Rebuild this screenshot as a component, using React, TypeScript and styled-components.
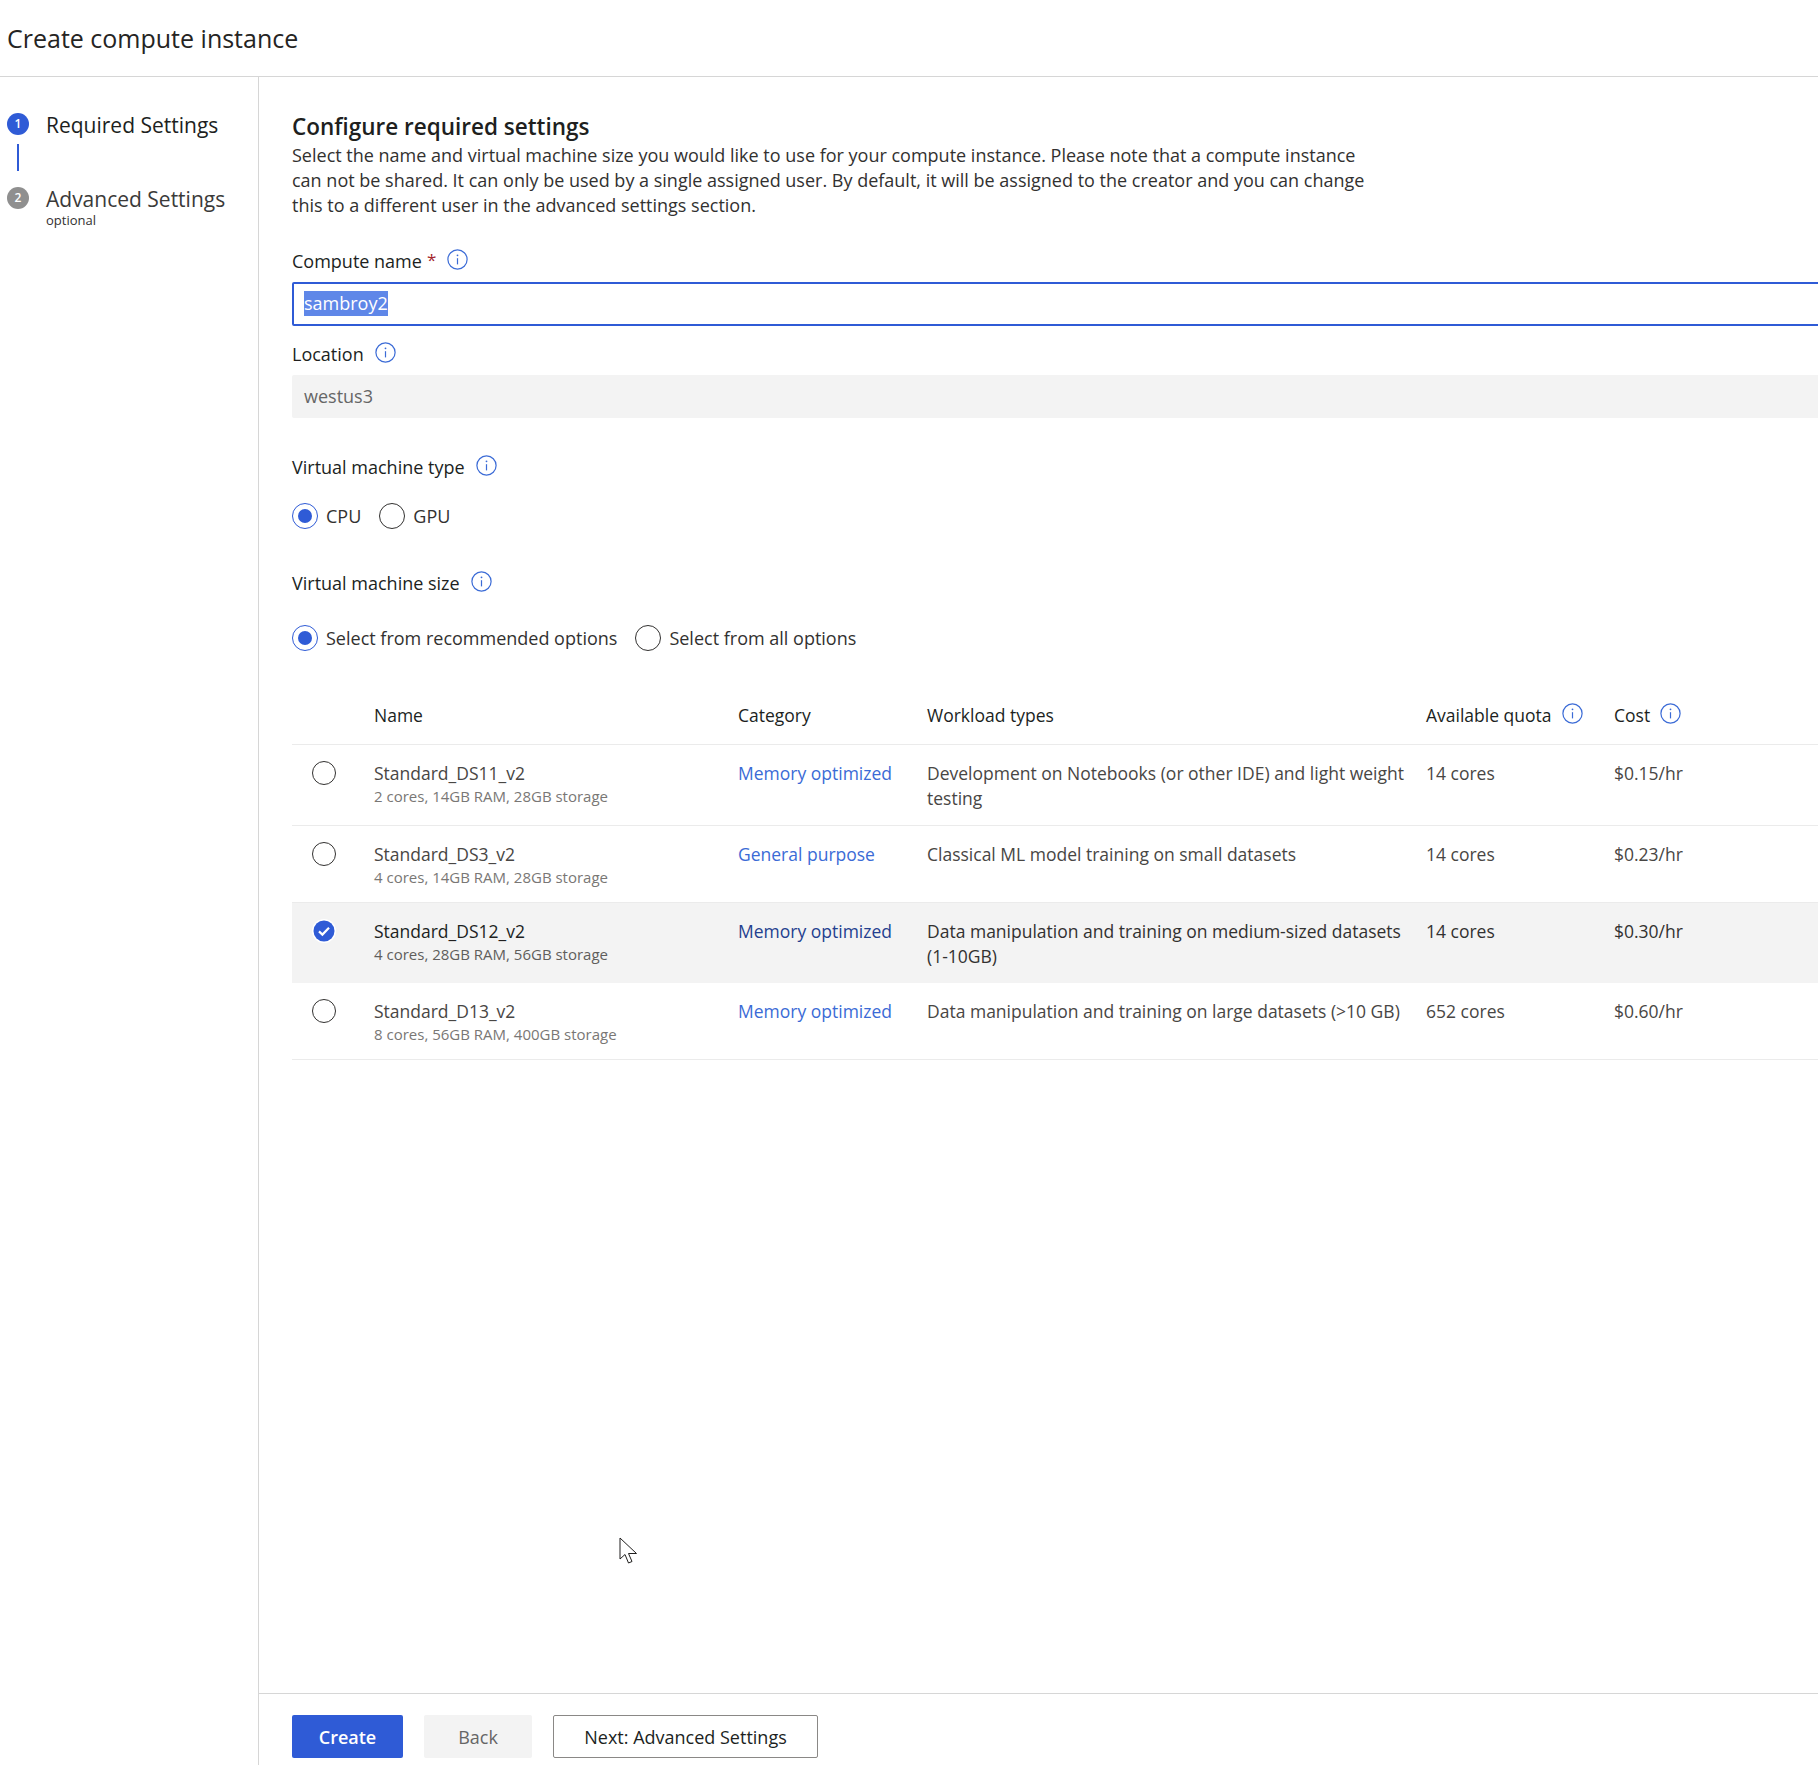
import styled, { createGlobalStyle } from 'styled-components';

const GlobalStyle = createGlobalStyle`
  html, body {
    margin: 0;
    padding: 0;
    background: #fff;
  }
  body {
    font-family: 'Open Sans', 'Noto Sans', sans-serif;
    color: #323130;
  }
`;

const Page = styled.div`
  width: 1818px;
  height: 1765px;
  display: flex;
  flex-direction: column;
  overflow: hidden;
`;

const Header = styled.header`
  height: 76px;
  flex: none;
  display: flex;
  align-items: center;
  padding: 0 0 0 7px;
  border-bottom: 1px solid #d6d6d6;
`;

const PageTitle = styled.h1`
  margin: 0;
  font-size: 25px;
  font-weight: 400;
  color: #252423;
`;

const Body = styled.div`
  flex: 1;
  display: flex;
  min-height: 0;
`;

const Sidebar = styled.aside`
  width: 259px;
  flex: none;
  box-sizing: border-box;
  border-right: 1px solid #d6d6d6;
  padding: 36px 0 0 7px;
`;

const Step = styled.div`
  display: grid;
  grid-template-columns: 22px 1fr;
  column-gap: 17px;
`;

const StepDot = styled.div<{ $active?: boolean }>`
  width: 22px;
  height: 22px;
  border-radius: 50%;
  background: ${(p) => (p.$active ? '#2f5bd6' : '#8f8f8f')};
  color: #fff;
  font-size: 12px;
  line-height: 22px;
  text-align: center;
  font-weight: 600;
`;

const StepName = styled.div<{ $active?: boolean }>`
  font-size: 21px;
  line-height: 24px;
  font-weight: ${(p) => (p.$active ? 500 : 400)};
  color: ${(p) => (p.$active ? '#201f1e' : '#3b3a39')};
  white-space: nowrap;
`;

const StepNote = styled.div`
  font-size: 13px;
  line-height: 18px;
  color: #323130;
`;

const Connector = styled.div`
  width: 2px;
  height: 27px;
  margin: 7px 0 16px 10px;
  background: #2f5bd6;
`;

const Main = styled.main`
  position: relative;
  flex: 1;
  min-width: 0;
  display: flex;
  flex-direction: column;
  overflow: hidden;
`;

const Content = styled.div`
  flex: 1;
  width: 1560px;
  padding: 36px 0 0 33px;
`;

const SectionTitle = styled.h2`
  margin: 0 0 2px;
  font-size: 22.5px;
  line-height: 28px;
  font-weight: 600;
  color: #201f1e;
`;

const Description = styled.p`
  margin: 0;
  width: 1090px;
  font-size: 18px;
  line-height: 25px;
  color: #323130;
`;

const LabelRow = styled.div<{ $top: number }>`
  display: flex;
  align-items: flex-start;
  height: 34px;
  margin-top: ${(p) => p.$top}px;
`;

const Label = styled.span`
  font-size: 18px;
  line-height: 27px;
  font-weight: 500;
  color: #201f1e;
`;

const Required = styled.span`
  margin-left: 5px;
  font-size: 17px;
  line-height: 24px;
  color: #a4262c;
`;

const InfoWrap = styled.span<{ $gap?: number }>`
  display: inline-flex;
  margin-left: ${(p) => p.$gap ?? 11}px;
  margin-top: 1px;
  color: #3b6bd6;
`;

const NameInput = styled.div`
  box-sizing: border-box;
  height: 44px;
  border: 2px solid #2f5bd6;
  border-radius: 2px;
  padding: 7px 0 0 10px;
  font-size: 18px;
  line-height: 25px;
`;

const Selected = styled.span`
  display: inline-block;
  background: #5f87e8;
  color: #fff;
`;

const ReadOnlyInput = styled.div`
  box-sizing: border-box;
  height: 43px;
  background: #f3f3f3;
  border-radius: 2px;
  padding: 0 12px;
  font-size: 18px;
  line-height: 43px;
  color: #666;
`;

const RadioGroup = styled.div<{ $top: number }>`
  display: flex;
  gap: 18px;
  margin-top: ${(p) => p.$top}px;
`;

const RadioOption = styled.label`
  display: flex;
  align-items: center;
  gap: 8px;
  height: 26px;
  font-size: 18px;
  color: #323130;
`;

const RadioCircle = styled.span<{ $checked?: boolean; $size?: number }>`
  box-sizing: border-box;
  width: ${(p) => p.$size ?? 26}px;
  height: ${(p) => p.$size ?? 26}px;
  flex: none;
  display: flex;
  align-items: center;
  justify-content: center;
  border-radius: 50%;
  border: 1.5px solid ${(p) => (p.$checked ? '#2f5bd6' : '#323130')};
  background: #fff;
`;

const RadioDot = styled.span`
  width: 14px;
  height: 14px;
  border-radius: 50%;
  background: #2f5bd6;
`;

const Table = styled.div`
  margin-top: 51px;
`;

const gridColumns = '82px 364px 189px 499px 188px 1fr';

const HeadRow = styled.div`
  display: grid;
  grid-template-columns: ${gridColumns};
  height: 42px;
  border-bottom: 1px solid #ebebeb;
`;

const HeadCell = styled.div`
  display: flex;
  align-items: flex-start;
  font-size: 17.5px;
  line-height: 27px;
  font-weight: 500;
  color: #201f1e;
`;

const Row = styled.div<{ $selected?: boolean }>`
  display: grid;
  grid-template-columns: ${gridColumns};
  padding: 16px 0 14px;
  background: ${(p) => (p.$selected ? '#f3f3f3' : 'transparent')};
  border-bottom: ${(p) => (p.$selected ? 'none' : '1px solid #ebebeb')};
  font-size: 17.5px;
  line-height: 25px;
`;

const RadioCell = styled.div`
  padding-left: 20px;
`;

const CheckedMark = styled.svg`
  display: block;
  width: 24px;
  height: 24px;
`;

const MachineName = styled.div<{ $selected?: boolean }>`
  color: ${(p) => (p.$selected ? '#201f1e' : '#484644')};
`;

const MachineSpecs = styled.div<{ $selected?: boolean }>`
  font-size: 15px;
  line-height: 21px;
  color: ${(p) => (p.$selected ? '#605e5c' : '#797775')};
`;

const CategoryLink = styled.a<{ $selected?: boolean }>`
  color: ${(p) => (p.$selected ? '#24408f' : '#3b6bd6')};
  text-decoration: none;
  white-space: nowrap;
`;

const TextCell = styled.div<{ $selected?: boolean; $wrap?: boolean }>`
  color: ${(p) => (p.$selected ? '#323130' : '#484644')};
  white-space: ${(p) => (p.$wrap ? 'normal' : 'nowrap')};
  padding-right: ${(p) => (p.$wrap ? '22px' : '0')};
`;

const Footer = styled.footer`
  height: 72px;
  flex: none;
  box-sizing: border-box;
  border-top: 1px solid #d6d6d6;
  padding: 21px 0 0 33px;
  display: flex;
  align-items: flex-start;
  gap: 21px;
`;

const Button = styled.button<{ $variant: 'primary' | 'disabled' | 'outline'; $width: number }>`
  box-sizing: border-box;
  width: ${(p) => p.$width}px;
  height: 43px;
  border-radius: 2px;
  font-family: inherit;
  font-size: 18px;
  font-weight: ${(p) => (p.$variant === 'primary' ? 600 : 500)};
  border: ${(p) => (p.$variant === 'outline' ? '1px solid #8a8886' : 'none')};
  background: ${(p) =>
    p.$variant === 'primary' ? '#2f5bd6' : p.$variant === 'disabled' ? '#f3f3f3' : '#fff'};
  color: ${(p) =>
    p.$variant === 'primary' ? '#fff' : p.$variant === 'disabled' ? '#666' : '#201f1e'};
`;

const Cursor = styled.svg`
  position: absolute;
  left: 360px;
  top: 1460px;
  width: 20px;
  height: 28px;
`;

const InfoIcon = ({ gap }: { gap?: number }) => (
  <InfoWrap $gap={gap}>
    <svg width="21" height="21" viewBox="0 0 21 21" fill="none">
      <circle cx="10.5" cy="10.5" r="9.6" stroke="currentColor" strokeWidth="1.2" />
      <circle cx="10.5" cy="6.3" r="0.9" fill="currentColor" />
      <path d="M10.5 9.2V15.4" stroke="currentColor" strokeWidth="1.2" />
    </svg>
  </InfoWrap>
);

const Radio = ({ checked, label }: { checked?: boolean; label: string }) => (
  <RadioOption>
    <RadioCircle $checked={checked}>{checked && <RadioDot />}</RadioCircle>
    {label}
  </RadioOption>
);

const sizes = [
  {
    name: 'Standard_DS11_v2',
    specs: '2 cores, 14GB RAM, 28GB storage',
    category: 'Memory optimized',
    workload: 'Development on Notebooks (or other IDE) and light weight testing',
    quota: '14 cores',
    cost: '$0.15/hr',
  },
  {
    name: 'Standard_DS3_v2',
    specs: '4 cores, 14GB RAM, 28GB storage',
    category: 'General purpose',
    workload: 'Classical ML model training on small datasets',
    quota: '14 cores',
    cost: '$0.23/hr',
  },
  {
    name: 'Standard_DS12_v2',
    specs: '4 cores, 28GB RAM, 56GB storage',
    category: 'Memory optimized',
    workload: 'Data manipulation and training on medium-sized datasets (1-10GB)',
    quota: '14 cores',
    cost: '$0.30/hr',
    selected: true,
  },
  {
    name: 'Standard_D13_v2',
    specs: '8 cores, 56GB RAM, 400GB storage',
    category: 'Memory optimized',
    workload: 'Data manipulation and training on large datasets (>10 GB)',
    quota: '652 cores',
    cost: '$0.60/hr',
  },
];

export default function App() {
  return (
    <Page>
      <GlobalStyle />
      <Header>
        <PageTitle>Create compute instance</PageTitle>
      </Header>
      <Body>
        <Sidebar>
          <Step>
            <StepDot $active>1</StepDot>
            <StepName $active>Required Settings</StepName>
          </Step>
          <Connector />
          <Step>
            <StepDot>2</StepDot>
            <div>
              <StepName>Advanced Settings</StepName>
              <StepNote>optional</StepNote>
            </div>
          </Step>
        </Sidebar>
        <Main>
          <Content>
            <SectionTitle>Configure required settings</SectionTitle>
            <Description>
              Select the name and virtual machine size you would like to use for your compute instance. Please note that a compute instance
              can not be shared. It can only be used by a single assigned user. By default, it will be assigned to the creator and you can change
              this to a different user in the advanced settings section.
            </Description>

            <LabelRow $top={30}>
              <Label>Compute name</Label>
              <Required>*</Required>
              <InfoIcon />
            </LabelRow>
            <NameInput>
              <Selected>sambroy2</Selected>
            </NameInput>

            <LabelRow $top={15}>
              <Label>Location</Label>
              <InfoIcon />
            </LabelRow>
            <ReadOnlyInput>westus3</ReadOnlyInput>

            <LabelRow $top={36}>
              <Label>Virtual machine type</Label>
              <InfoIcon />
            </LabelRow>
            <RadioGroup $top={15}>
              <Radio checked label="CPU" />
              <Radio label="GPU" />
            </RadioGroup>

            <LabelRow $top={41}>
              <Label>Virtual machine size</Label>
              <InfoIcon />
            </LabelRow>
            <RadioGroup $top={21}>
              <Radio checked label="Select from recommended options" />
              <Radio label="Select from all options" />
            </RadioGroup>

            <Table>
              <HeadRow>
                <div />
                <HeadCell>Name</HeadCell>
                <HeadCell>Category</HeadCell>
                <HeadCell>Workload types</HeadCell>
                <HeadCell>
                  Available quota
                  <InfoIcon gap={10} />
                </HeadCell>
                <HeadCell>
                  Cost
                  <InfoIcon gap={10} />
                </HeadCell>
              </HeadRow>
              {sizes.map((s) => (
                <Row key={s.name} $selected={s.selected}>
                  <RadioCell>
                    {s.selected ? (
                      <CheckedMark viewBox="0 0 24 24">
                        <circle cx="12" cy="12" r="12" fill="#fff" />
                        <circle cx="12" cy="12" r="10.5" fill="#2f5bd6" />
                        <path d="M7 12.4l3.4 3.2L17 8.8" fill="none" stroke="#fff" strokeWidth="2.2" />
                      </CheckedMark>
                    ) : (
                      <RadioCircle $size={24} />
                    )}
                  </RadioCell>
                  <div>
                    <MachineName $selected={s.selected}>{s.name}</MachineName>
                    <MachineSpecs $selected={s.selected}>{s.specs}</MachineSpecs>
                  </div>
                  <div>
                    <CategoryLink href="#" $selected={s.selected}>
                      {s.category}
                    </CategoryLink>
                  </div>
                  <TextCell $selected={s.selected} $wrap>
                    {s.workload}
                  </TextCell>
                  <TextCell $selected={s.selected}>{s.quota}</TextCell>
                  <TextCell $selected={s.selected}>{s.cost}</TextCell>
                </Row>
              ))}
            </Table>
          </Content>
          <Footer>
            <Button $variant="primary" $width={111}>
              Create
            </Button>
            <Button $variant="disabled" $width={108}>
              Back
            </Button>
            <Button $variant="outline" $width={265}>
              Next: Advanced Settings
            </Button>
          </Footer>
          <Cursor viewBox="0 0 20 28">
            <path
              d="M1 1V22L6 17.5L9.5 26L13 24.5L9.5 16.5H17.5Z"
              fill="#fff"
              stroke="#201f1e"
              strokeWidth="1"
            />
          </Cursor>
        </Main>
      </Body>
    </Page>
  );
}
